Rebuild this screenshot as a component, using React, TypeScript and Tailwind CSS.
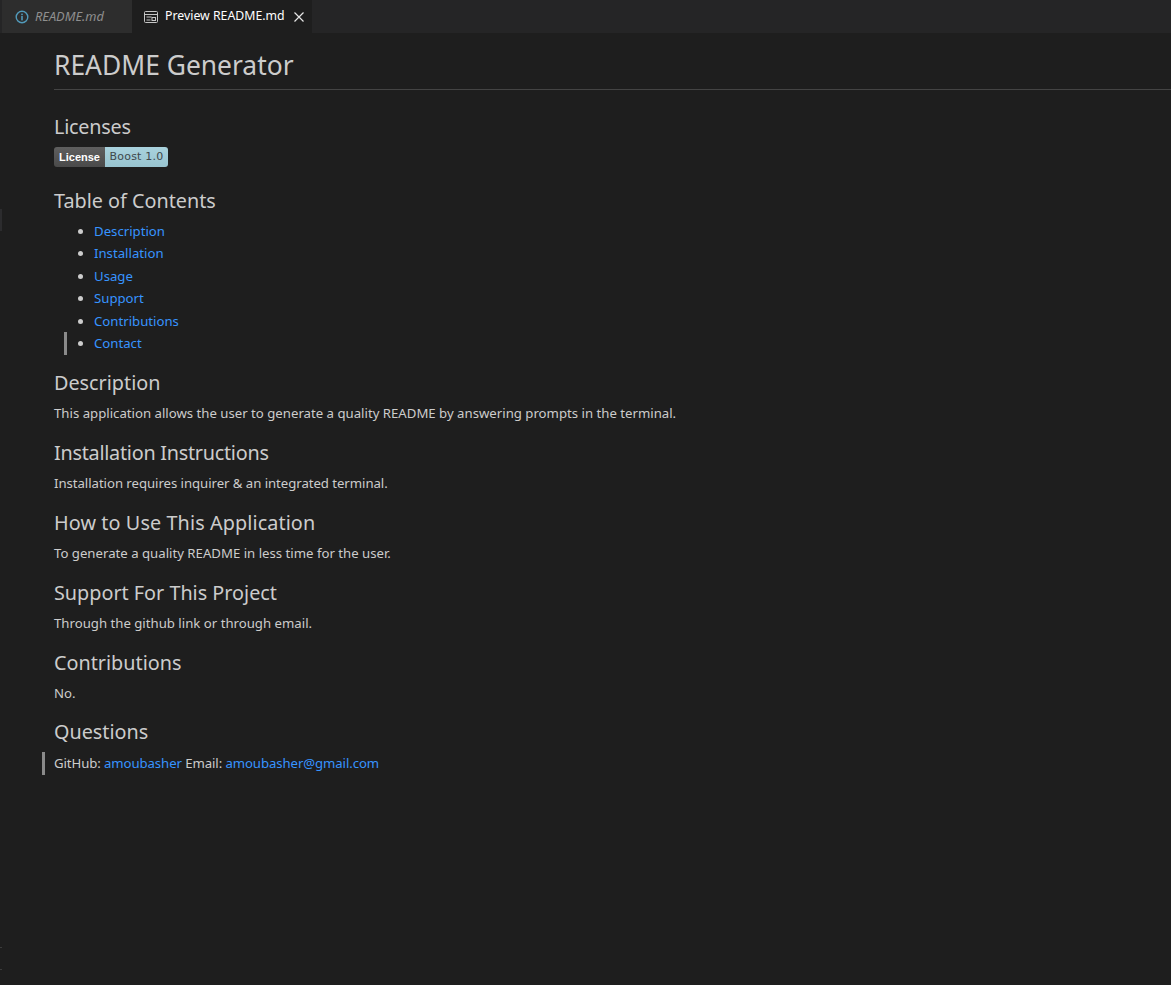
import React from "react";

function Section({ title, tight, top, children }: { title: string; tight?: string; top?: string; children: React.ReactNode }) {
  return (
    <section>
      <h2 className={`text-[19.8px] leading-[25.2px] mb-[6.8px] font-normal ${top ?? "mt-[15.7px]"} ${tight ?? ""}`}>{title}</h2>
      {children}
    </section>
  );
}

const links = ["Description", "Installation", "Usage", "Support", "Contributions", "Contact"];

export default function App() {
  return (
    <div className="relative flex h-[985px] w-[1171px] flex-col overflow-hidden bg-[#1e1e1e] font-['Noto_Sans',sans-serif] text-[13.2px] leading-[22.4px] text-[#cccccc]">
      <div className="flex h-[33px] shrink-0 bg-[#252526] pl-[2px]">
        <div className="flex w-[130px] items-center gap-[6px] bg-[#2d2d2d] pl-[13px] text-[12.8px] italic text-[#8f8f8f]">
          <svg width="14" height="14" viewBox="0 0 14 14" fill="none" className="shrink-0">
            <circle cx="7" cy="7" r="5.8" stroke="#519aba" strokeWidth="1.4" />
            <rect x="6.2" y="6" width="1.6" height="4.4" fill="#519aba" />
            <rect x="6.2" y="3.6" width="1.6" height="1.6" fill="#519aba" />
          </svg>
          <span>README.md</span>
        </div>
        <div className="flex w-[180px] items-center whitespace-nowrap bg-[#1e1e1e] pl-[12px] text-[12.3px] text-white">
          <svg width="14" height="14" viewBox="0 0 14 14" fill="none" className="mr-[7px] shrink-0">
            <rect x="0.5" y="1.5" width="13" height="11" rx="1" stroke="#c5c5c5" />
            <path d="M1 4.5h12M2.5 7h5M2.5 10h4" stroke="#c5c5c5" />
            <rect x="8" y="7.5" width="3.5" height="3" stroke="#c5c5c5" />
          </svg>
          <span>Preview README.md</span>
          <svg width="12" height="12" viewBox="0 0 12 12" className="ml-[8px] shrink-0" fill="none">
            <path d="M1.5 1.5l9 9M10.5 1.5l-9 9" stroke="#e6e6e6" strokeWidth="1.2" />
          </svg>
        </div>
      </div>

      <div className="flex-1 pl-[54px]">
        <h1 className="mb-[24px] mt-[16px] border-b border-[#444444] pb-[6px] text-[26.4px] leading-[33.6px] font-normal">README Generator</h1>
        <Section title="Licenses" tight="tracking-[-0.2px]">
          <div className="mb-[21px] mt-[8px] flex h-[20px] w-[114px] overflow-hidden rounded-[3px] text-[11px] leading-[20px]">
            <span className="flex w-[51px] justify-center bg-gradient-to-b from-[#5f5f5f] to-[#4a4a4a] font-['Liberation_Sans',sans-serif] font-bold text-white">License</span>
            <span className="flex w-[63px] justify-center bg-gradient-to-b from-[#a9d2dd] to-[#98c4d0] font-['DejaVu_Sans',sans-serif] tracking-[0.02em] text-[#40484b]">Boost 1.0</span>
          </div>
        </Section>
        <Section title="Table of Contents">
          <ul className="mt-[7px] list-disc pl-[40px]">
            {links.map((l) => (
              <li key={l} className="marker:text-[#cccccc]"><a className="text-[#3794ff]">{l}</a></li>
            ))}
          </ul>
        </Section>
        <Section title="Description" top="mt-[15.5px]"><p className="mb-[15.5px]">This application allows the user to generate a quality README by answering prompts in the terminal.</p></Section>
        <Section title="Installation Instructions" top="mt-[15.5px]" tight="tracking-[-0.25px]"><p className="mb-[15.5px] tracking-[-0.05px]">Installation requires inquirer &amp; an integrated terminal.</p></Section>
        <Section title="How to Use This Application" top="mt-[15.5px]" tight="tracking-[0.1px]"><p className="mb-[15.5px]">To generate a quality README in less time for the user.</p></Section>
        <Section title="Support For This Project" top="mt-[15.5px]"><p className="mb-[15.5px]">Through the github link or through email.</p></Section>
        <Section title="Contributions" top="mt-[15.5px]"><p className="mb-[15px]">No.</p></Section>
        <Section title="Questions" top="mt-[15px]">
          <p className="mt-[7.5px] tracking-[-0.09px]">GitHub: <a className="text-[#3794ff]">amoubasher</a> Email: <a className="text-[#3794ff]">amoubasher@gmail.com</a></p>
        </Section>
      </div>
      <div className="absolute left-[64px] top-[332px] h-[23px] w-[3px] bg-[#8a8a8a]" />
      <div className="absolute left-[42px] top-[752px] h-[23px] w-[3px] bg-[#8a8a8a]" />
      <div className="absolute left-0 top-[209px] h-[22px] w-[2px] bg-[#2c2c2e]" />
      <div className="absolute left-0 top-[947px] h-[1px] w-[2px] bg-[#3c3c3c]" />
      <div className="absolute left-0 top-[969px] h-[1px] w-[2px] bg-[#3c3c3c]" />
    </div>
  );
}
